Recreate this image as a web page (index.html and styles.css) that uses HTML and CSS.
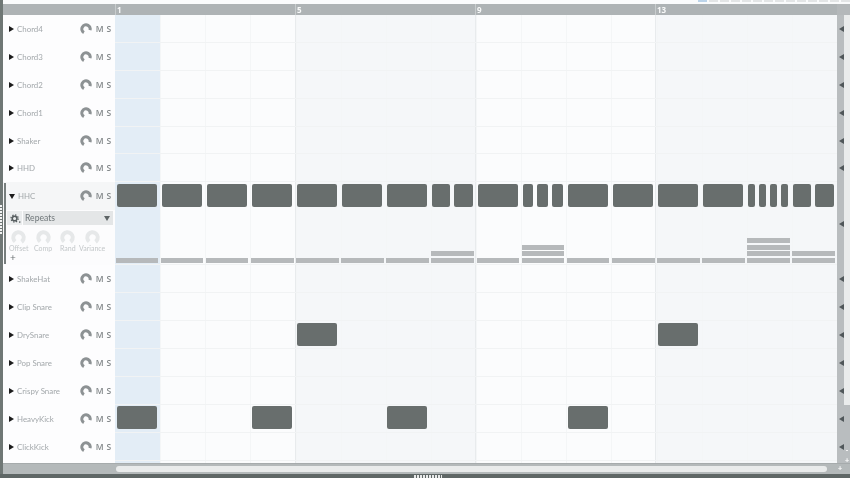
FILE: index.html
```html
<!DOCTYPE html>
<html lang="en">
<head>
<meta charset="utf-8">
<title>Drum sequencer</title>
<link rel="stylesheet" href="styles.css">
</head>
<body>
<svg class="defs" width="0" height="0" aria-hidden="true">
  <symbol id="knob" viewBox="0 0 22 22"><circle cx="11" cy="11" r="7.6" fill="none" stroke="currentColor" stroke-width="5.6" stroke-dasharray="33 14.75" transform="rotate(120 11 11)"/></symbol>
  <symbol id="pknob" viewBox="0 0 22 22"><circle cx="11" cy="11" r="7.6" fill="none" stroke="currentColor" stroke-width="6" stroke-dasharray="37 10.75" transform="rotate(130 11 11)"/></symbol>
  <symbol id="gear" viewBox="0 0 24 20"><circle cx="10" cy="10" r="5.2" fill="none" stroke="#565d5f" stroke-width="3.4"/><circle cx="10" cy="10" r="8" fill="none" stroke="#565d5f" stroke-width="2.8" stroke-dasharray="3 3.3"/><circle cx="21.5" cy="18" r="1.8" fill="#565d5f"/></symbol>
</svg>
<div class="app">
  <div class="edge-left"><span class="edge-grip"></span></div>
  <div class="main">
    <div class="tabs"><i class="tab on"></i><i class="tab"></i><i class="tab"></i><i class="tab"></i><i class="tab"></i><i class="tab"></i><i class="tab"></i><i class="tab"></i><i class="tab"></i><i class="tab"></i><i class="tab"></i><i class="tab"></i><i class="tab"></i><i class="tab"></i></div>
    <div class="ruler">
      <div class="ruler-pad"></div>
      <div class="ruler-bars"><span>1</span><span>5</span><span>9</span><span>13</span></div>
      <div class="ruler-end"></div>
    </div>
    <div class="body">
      <div class="row">
        <div class="head"><div class="head-top"><span class="arrow"></span><span class="name">Chord4</span><svg class="knob"><use href="#knob"/></svg><span class="ms">M</span><span class="ms">S</span></div></div>
        <div class="lane"></div><div class="row-end"></div>
      </div>
      <div class="row">
        <div class="head"><div class="head-top"><span class="arrow"></span><span class="name">Chord3</span><svg class="knob"><use href="#knob"/></svg><span class="ms">M</span><span class="ms">S</span></div></div>
        <div class="lane"></div><div class="row-end"></div>
      </div>
      <div class="row">
        <div class="head"><div class="head-top"><span class="arrow"></span><span class="name">Chord2</span><svg class="knob"><use href="#knob"/></svg><span class="ms">M</span><span class="ms">S</span></div></div>
        <div class="lane"></div><div class="row-end"></div>
      </div>
      <div class="row">
        <div class="head"><div class="head-top"><span class="arrow"></span><span class="name">Chord1</span><svg class="knob"><use href="#knob"/></svg><span class="ms">M</span><span class="ms">S</span></div></div>
        <div class="lane"></div><div class="row-end"></div>
      </div>
      <div class="row">
        <div class="head"><div class="head-top"><span class="arrow"></span><span class="name">Shaker</span><svg class="knob"><use href="#knob"/></svg><span class="ms">M</span><span class="ms">S</span></div></div>
        <div class="lane"></div><div class="row-end"></div>
      </div>
      <div class="row">
        <div class="head"><div class="head-top"><span class="arrow"></span><span class="name">HHD</span><svg class="knob"><use href="#knob"/></svg><span class="ms">M</span><span class="ms">S</span></div></div>
        <div class="lane"></div><div class="row-end"></div>
      </div>
      <div class="row open">
        <div class="head">
          <div class="head-top"><span class="arrow down"></span><span class="name">HHC</span><svg class="knob"><use href="#knob"/></svg><span class="ms">M</span><span class="ms">S</span></div>
          <div class="panel">
            <div class="select">
              <div class="gear"><svg><use href="#gear"/></svg></div>
              <div class="select-box"><span class="select-label">Repeats</span><span class="caret"></span></div>
            </div>
            <div class="knobs">
              <div class="pk"><svg><use href="#pknob"/></svg><span>Offset</span></div>
              <div class="pk"><svg><use href="#pknob"/></svg><span>Comp</span></div>
              <div class="pk"><svg><use href="#pknob"/></svg><span>Rand</span></div>
              <div class="pk"><svg><use href="#pknob"/></svg><span>Variance</span></div>
            </div>
            <div class="plus">+</div>
          </div>
        </div>
        <div class="lane lane-open">
          <div class="notes"><div class="note"></div></div>
          <div class="notes"><div class="note"></div></div>
          <div class="notes"><div class="note"></div></div>
          <div class="notes"><div class="note"></div></div>
          <div class="notes"><div class="note"></div></div>
          <div class="notes"><div class="note"></div></div>
          <div class="notes"><div class="note"></div></div>
          <div class="notes"><div class="note"></div><div class="note"></div></div>
          <div class="notes"><div class="note"></div></div>
          <div class="notes"><div class="note"></div><div class="note"></div><div class="note"></div></div>
          <div class="notes"><div class="note"></div></div>
          <div class="notes"><div class="note"></div></div>
          <div class="notes"><div class="note"></div></div>
          <div class="notes"><div class="note"></div></div>
          <div class="notes"><div class="note"></div><div class="note"></div><div class="note"></div><div class="note"></div></div>
          <div class="notes"><div class="note"></div><div class="note"></div></div>
          <div class="vel"><i></i></div>
          <div class="vel"><i></i></div>
          <div class="vel"><i></i></div>
          <div class="vel"><i></i></div>
          <div class="vel"><i></i></div>
          <div class="vel"><i></i></div>
          <div class="vel"><i></i></div>
          <div class="vel"><i></i><i></i></div>
          <div class="vel"><i></i></div>
          <div class="vel"><i></i><i></i><i></i></div>
          <div class="vel"><i></i></div>
          <div class="vel"><i></i></div>
          <div class="vel"><i></i></div>
          <div class="vel"><i></i></div>
          <div class="vel"><i></i><i></i><i></i><i></i></div>
          <div class="vel"><i></i><i></i></div>
        </div>
        <div class="row-end"></div>
      </div>
      <div class="row">
        <div class="head"><div class="head-top"><span class="arrow"></span><span class="name">ShakeHat</span><svg class="knob"><use href="#knob"/></svg><span class="ms">M</span><span class="ms">S</span></div></div>
        <div class="lane"></div><div class="row-end"></div>
      </div>
      <div class="row">
        <div class="head"><div class="head-top"><span class="arrow"></span><span class="name">Clip Snare</span><svg class="knob"><use href="#knob"/></svg><span class="ms">M</span><span class="ms">S</span></div></div>
        <div class="lane"></div><div class="row-end"></div>
      </div>
      <div class="row">
        <div class="head"><div class="head-top"><span class="arrow"></span><span class="name">DrySnare</span><svg class="knob"><use href="#knob"/></svg><span class="ms">M</span><span class="ms">S</span></div></div>
        <div class="lane"><div class="notes c5"><div class="note"></div></div><div class="notes c13"><div class="note"></div></div></div><div class="row-end"></div>
      </div>
      <div class="row">
        <div class="head"><div class="head-top"><span class="arrow"></span><span class="name">Pop Snare</span><svg class="knob"><use href="#knob"/></svg><span class="ms">M</span><span class="ms">S</span></div></div>
        <div class="lane"></div><div class="row-end"></div>
      </div>
      <div class="row">
        <div class="head"><div class="head-top"><span class="arrow"></span><span class="name">Crispy Snare</span><svg class="knob"><use href="#knob"/></svg><span class="ms">M</span><span class="ms">S</span></div></div>
        <div class="lane"></div><div class="row-end"></div>
      </div>
      <div class="row">
        <div class="head"><div class="head-top"><span class="arrow"></span><span class="name">HeavyKick</span><svg class="knob"><use href="#knob"/></svg><span class="ms">M</span><span class="ms">S</span></div></div>
        <div class="lane"><div class="notes c1"><div class="note"></div></div><div class="notes c4"><div class="note"></div></div><div class="notes c7"><div class="note"></div></div><div class="notes c11"><div class="note"></div></div></div><div class="row-end solid"></div>
      </div>
      <div class="row">
        <div class="head"><div class="head-top"><span class="arrow"></span><span class="name">ClickKick</span><svg class="knob"><use href="#knob"/></svg><span class="ms">M</span><span class="ms">S</span></div></div>
        <div class="lane"></div><div class="row-end solid"></div>
      </div>
      <div class="filler"><div class="head"></div><div class="lane"></div><div class="filler-end"></div></div>
    </div>
    <div class="scrollrow"><div class="scrollthumb"></div></div>
  </div>
</div>
<div class="footer"><span class="footer-grip"></span></div>
<span class="zoom-btn z-minus">-</span>
<span class="zoom-btn z-plus-a">+</span>
<span class="zoom-btn z-plus-b">+</span>
</body>
</html>
```
FILE: styles.css
```css
* { box-sizing: border-box; }
html, body { margin: 0; padding: 0; }
body { width: 850px; height: 478px; overflow: hidden; background: #f4f6f7; font-family: Lato, "Open Sans", "Liberation Sans", sans-serif; display: flex; flex-direction: column; position: relative; }
.defs { position: absolute; }
.app { height: 474px; display: flex; }
.edge-left { width: 3px; background: #6f7775; display: flex; flex-direction: column; padding-top: 205px; }
.edge-grip { height: 29px; width: 2px; background: repeating-linear-gradient(#f2f3f3 0 2px, #6f7775 2px 3px); }
.main { flex: 1; display: flex; flex-direction: column; min-width: 0; background: #fff; }
.tabs { height: 4px; display: flex; justify-content: flex-end; gap: 2px; background: #fafbfc; }
.tab { width: 9px; height: 2px; background: #e3e5e6; }
.tab.on { background: #bcd4ea; }
.ruler { height: 11px; display: flex; background: #aeb3b5; }
.ruler-pad { width: 112px; flex: none; }
.ruler-bars { width: 722px; flex: none; display: grid; grid-template-columns: repeat(4, 180px) 2px; }
.ruler-bars span { font-family: "Open Sans", sans-serif; font-size: 8px; line-height: 11px; font-weight: 700; color: #f8f9f9; padding-left: 1px; border-left: 1px solid #c8cccd; will-change: transform; }
.ruler-end { flex: 1; background: #b4b8ba; }
.body { flex: 1; display: flex; flex-direction: column; min-height: 0; }
.row { display: flex; height: 27.9px; flex: none; }
.row.open { height: 83px; }
.head { width: 112px; flex: none; position: relative; background: #fdfdfe; }
.head-top { height: 27.9px; display: flex; align-items: center; padding: 0 1.5px 0 6px; }
.row.open .head { background: #fcfcfd; }
.row.open .head::before { content: ""; position: absolute; left: 1px; top: 1px; bottom: 1px; width: 2px; background: #777e7d; }
.row.open .head-top { background: #f5f6f7; }
.arrow { width: 0; height: 0; flex: none; border-left: 5px solid #1c1c1c; border-top: 3px solid transparent; border-bottom: 3px solid transparent; }
.arrow.down { border-top: 5px solid #1c1c1c; border-bottom: 0; border-left: 3px solid transparent; border-right: 3px solid transparent; }
.name { flex: 1; margin-left: 3px; font-size: 7.9px; color: #a3a8ab; white-space: nowrap; will-change: transform; }
.knob { width: 12px; height: 12px; margin-right: 2.5px; flex: none; display: block; color: #8d9294; }
.ms { font-family: "Open Sans", sans-serif; font-size: 8.5px; font-weight: 600; color: #83888a; width: 9.5px; text-align: center; line-height: 10px; will-change: transform; }
.panel { padding: 1px 2px 0 3.5px; }
.select { display: flex; align-items: center; height: 14px; gap: 1px; margin-left: .5px; }
.gear { width: 15px; height: 14px; flex: none; background: #ebedee; display: flex; align-items: center; justify-content: center; padding-left: 2px; }
.gear svg { width: 11px; height: 9px; display: block; }
.select-box { flex: 1; height: 14px; background: #e4e6e7; padding: 0 3px 0 2px; display: flex; justify-content: space-between; align-items: center; }
.select-label { font-size: 8.6px; line-height: 14px; color: #70777a; will-change: transform; }
.caret { width: 0; height: 0; border-top: 5px solid #5e6466; border-left: 3px solid transparent; border-right: 3px solid transparent; }
.knobs { display: flex; margin-top: 5px; }
.pk { width: 24.5px; display: flex; flex-direction: column; align-items: center; color: #e6e8e9; }
.pk svg { width: 15px; height: 15px; display: block; }
.pk span { font-size: 7px; line-height: 8px; color: #c3c7c9; margin-top: -1px; white-space: nowrap; will-change: transform; }
.plus { font-size: 10px; line-height: 9px; color: #6c7274; margin-left: 3.5px; margin-top: 1px; will-change: transform; }
.lane {
  width: 722px; flex: none;
  display: grid; grid-template-columns: repeat(16, 1fr); grid-template-rows: 27.9px;
  border-bottom: 1px solid #f1f3f4;
  background-image:
    linear-gradient(#e8ebed, #e8ebed),
    linear-gradient(#e8ebed, #e8ebed),
    linear-gradient(#e8ebed, #e8ebed),
    linear-gradient(90deg, #e3edf6 45px, transparent 45px),
    repeating-linear-gradient(90deg, #f4f6f7 0 1px, transparent 1px 45.125px),
    linear-gradient(90deg, #fbfcfd 180px, #f5f7f9 180px 360px, #fbfcfd 360px 540px, #f5f7f9 540px);
  background-repeat: no-repeat;
  background-size: 1px 100%, 1px 100%, 1px 100%, 100% 100%, 100% 100%, 100% 100%;
  background-position: 180px 0, 360px 0, 540px 0, 0 0, 0 0, 0 0;
}
.lane-open { grid-template-rows: 27.9px 1fr; }
.notes { min-width: 0; display: flex; gap: 4px; padding: 1.5px 3.5px 3px 1.5px; }
.note { flex: 1; height: 23px; min-width: 0; background: #686e6d; border-radius: 2px; }
.c1 { grid-column: 1; }
.c4 { grid-column: 4; }
.c5 { grid-column: 5; }
.c7 { grid-column: 7; }
.c11 { grid-column: 11; }
.c13 { grid-column: 13; }
.vel { min-width: 0; display: flex; flex-direction: column; justify-content: flex-end; gap: 1.5px; padding: 0 2px 1.4px .5px; }
.vel i { display: block; height: 5px; background: #b6b9bb; }
.row-end { flex: 1; position: relative; background: linear-gradient(90deg, #b9bdbf 7px, #eaecec 7px); display: flex; align-items: center; padding-left: 2px; }
.row-end.solid { background: #b9bdbf; }
.row-end::after { content: ""; width: 0; height: 0; border-right: 5px solid #50575a; border-top: 3.5px solid transparent; border-bottom: 3.5px solid transparent; }
.filler { flex: 1; display: flex; min-height: 0; }
.filler .lane { border-bottom: 0; }
.filler-end { flex: 1; background: #b9bdbf; }
.scrollrow { height: 11px; flex: none; background: #b4b9ba; display: flex; align-items: center; padding-left: 113px; border-top: 1px solid #a6abac; }
.scrollthumb { width: 711px; height: 6px; border-radius: 3px; background: #e9ebeb; }
.zoom-btn { position: absolute; color: #fff; font-size: 8px; font-weight: 700; line-height: 7px; width: 8px; text-align: center; will-change: transform; }
.z-minus { left: 843px; top: 447px; }
.z-plus-a { left: 843px; top: 457px; }
.z-plus-b { left: 836px; top: 465px; }
.footer { height: 4px; background: #5f6766; display: flex; justify-content: center; padding: 1px 0 0 6px; }
.footer-grip { width: 28px; height: 3px; background: repeating-linear-gradient(90deg, #e8eaea 0 2px, #5f6766 2px 3px); }
```
